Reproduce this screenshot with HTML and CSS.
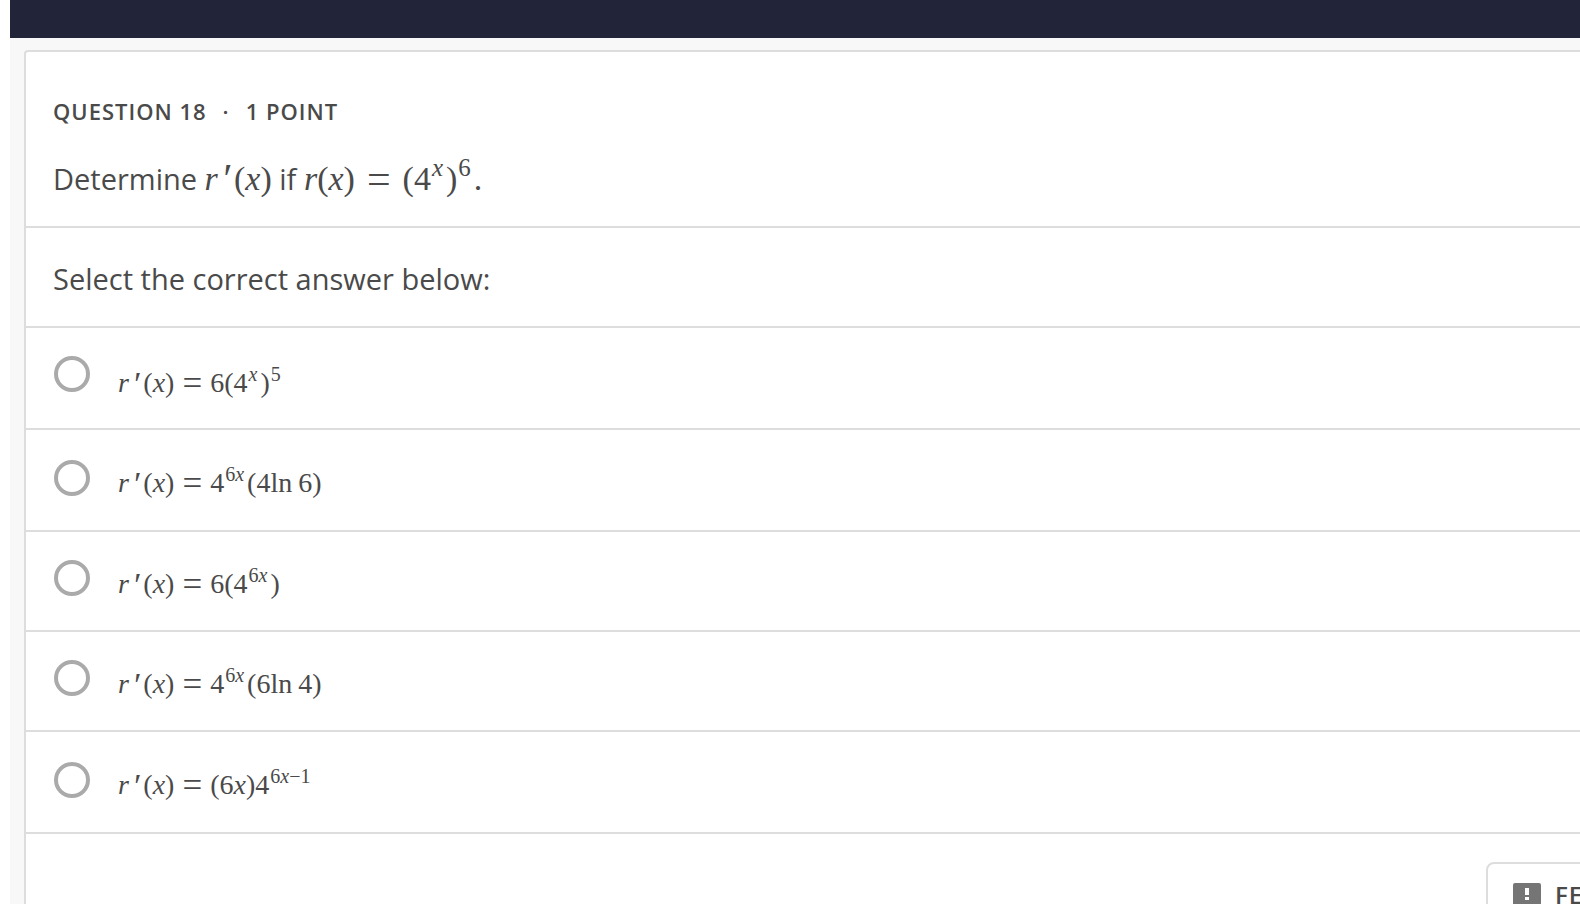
FILE: index.html
```html
<!DOCTYPE html>
<html lang="en">
<head>
<meta charset="utf-8">
<title>Question 18</title>
<link rel="stylesheet" href="styles.css">
</head>
<body>
<div class="page">
  <header class="topbar"></header>
  <main class="card">
    <section class="question">
      <h1 class="eyebrow">Question 18<span class="dot">·</span>1 Point</h1>
      <p class="prompt">Determine <span class="math math-large"><i>r</i><span class="prime">′</span>(<i>x</i>)</span> if <span class="math math-large"><i>r</i>(<i>x</i>)<span class="eq">=</span>(4<sup><i>x</i></sup>)<sup>6</sup>.</span></p>
    </section>
    <form class="answers">
      <fieldset class="choices">
        <legend class="instruction">Select the correct answer below:</legend>
        <label class="option tall low"><input class="radio" type="radio" name="answer"><span class="math"><i>r</i><span class="prime">′</span>(<i>x</i>)<span class="eq">=</span>6(4<sup><i>x</i></sup>)<sup>5</sup></span></label>
        <label class="option tall"><input class="radio" type="radio" name="answer"><span class="math"><i>r</i><span class="prime">′</span>(<i>x</i>)<span class="eq">=</span>4<sup>6<i>x</i></sup>(4<span class="fn">ln</span>6)</span></label>
        <label class="option"><input class="radio" type="radio" name="answer"><span class="math"><i>r</i><span class="prime">′</span>(<i>x</i>)<span class="eq">=</span>6(4<sup>6<i>x</i></sup>)</span></label>
        <label class="option"><input class="radio" type="radio" name="answer"><span class="math"><i>r</i><span class="prime">′</span>(<i>x</i>)<span class="eq">=</span>4<sup>6<i>x</i></sup>(6<span class="fn">ln</span>4)</span></label>
        <label class="option tall"><input class="radio" type="radio" name="answer"><span class="math"><i>r</i><span class="prime">′</span>(<i>x</i>)<span class="eq">=</span>(6<i>x</i>)4<sup>6<i>x</i>−1</sup></span></label>
      </fieldset>
    </form>
    <footer class="actions">
      <button class="feedback" type="button">
        <svg class="feedback-icon" width="28" height="28" viewBox="0 0 28 28" aria-hidden="true">
          <path fill="#757575" d="M2 0h24a2 2 0 0 1 2 2v18a2 2 0 0 1-2 2H6l-6 6V2a2 2 0 0 1 2-2z"/>
          <path fill="#fff" d="M12 5h4v7h-4zM12 14h4v3h-4z"/>
        </svg>
        FEEDBACK
      </button>
    </footer>
  </main>
</div>
</body>
</html>
```

FILE: styles.css
```css
* {
  box-sizing: border-box;
}

body {
  margin: 0;
  background: #fff;
  color: #4a4a4a;
  font-family: "Open Sans", sans-serif;
  font-size: 29px;
  overflow: hidden;
}

.page {
  display: flex;
  flex-direction: column;
  min-height: 100vh;
  margin-left: 10px;
  background: #f8f8f8;
}

.topbar {
  height: 38px;
  background: #22243a;
}

.card {
  flex: 1;
  margin: 12px 0 0 14px;
  border: solid #ddd;
  border-width: 2px 0 0 2px;
  border-radius: 4px 0 0 0;
  background: #fff;
}

.question {
  height: 176px;
  padding: 43px 27px 0;
  border-bottom: 2px solid #ddd;
}

.eyebrow {
  margin: 0;
  font-size: 22px;
  font-weight: 600;
  line-height: 32px;
  letter-spacing: 1px;
  text-transform: uppercase;
}

.dot {
  margin: 0 16px;
}

.prompt {
  margin: 24px 0 0;
  line-height: 56px;
}

.math {
  font-family: "Liberation Serif", serif;
  font-size: 28px;
  line-height: 40px;
  white-space: nowrap;
}

.math-large {
  font-size: 34px;
}

.math sup {
  margin: 0 3px 0 1px;
  font-size: 20px;
  line-height: 0;
  vertical-align: 11px;
}

.math-large sup {
  font-size: 25px;
  vertical-align: 14px;
}

.prime {
  margin: 0 4px 0 3px;
  font-size: 34px;
  font-style: italic;
  line-height: 0;
  vertical-align: -3px;
}

.math-large .prime {
  font-size: 42px;
}

.eq {
  margin: 0 8px;
  font-size: 35px;
  line-height: 0;
  vertical-align: -3px;
}

.math-large .eq {
  margin: 0 12px;
  font-size: 42px;
}

.fn {
  margin-right: 6px;
}

.choices {
  margin: 0;
  padding: 0;
  border: 0;
}

.instruction {
  display: block;
  width: 100%;
  height: 100px;
  padding: 29px 27px;
  border-bottom: 2px solid #ddd;
  line-height: 44px;
}

.option {
  display: flex;
  align-items: flex-start;
  gap: 28px;
  height: 100px;
  padding: 28px 28px 0;
  border-bottom: 2px solid #ddd;
}

.option .math {
  margin-top: 4px;
}

.option.low .math {
  margin-top: 7px;
}

.tall {
  height: 102px;
}

.tall:not(.low) {
  padding-top: 30px;
}

.tall:not(.low) .math {
  margin-top: 3px;
}

.radio {
  appearance: none;
  flex: none;
  width: 36px;
  height: 36px;
  margin: 0;
  border: 4px solid #aaa;
  border-radius: 50%;
  background: #fff;
}

.actions {
  display: flex;
  justify-content: flex-end;
  height: 70px;
  padding-top: 28px;
  overflow: hidden;
}

.feedback {
  display: flex;
  flex: none;
  align-items: flex-start;
  gap: 14px;
  width: 200px;
  height: 64px;
  margin-right: -106px;
  padding: 19px 25px;
  border: 2px solid #ddd;
  border-radius: 8px;
  background: #fff;
  color: #4a4a4a;
  font: 600 24px/24px "Open Sans", sans-serif;
  letter-spacing: 1px;
}

.feedback-icon {
  flex: none;
}
```
